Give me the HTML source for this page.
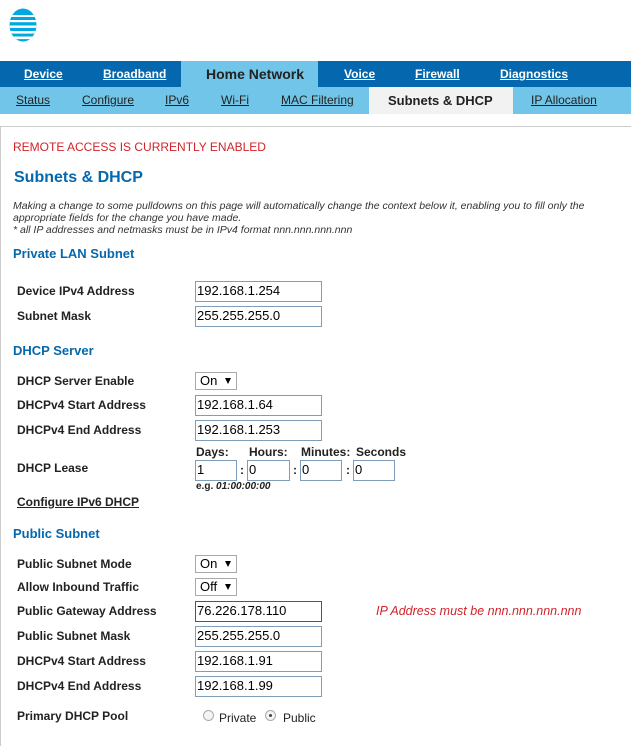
<!DOCTYPE html>
<html><head><style>
body{margin:0;width:631px;height:733px;background:#fff;font-family:"Liberation Sans",Arial,sans-serif;position:relative;overflow:hidden}
.a{position:absolute;white-space:nowrap;line-height:1}
.tn{color:#fff;font-weight:bold;font-size:12px;text-decoration:underline}
.sn{color:#222;font-size:12px;text-decoration:underline}
.l{font-size:12px;font-weight:bold;color:#222}
.h{font-size:13px;font-weight:bold;color:#0568ae}
.i{position:absolute;height:19px;border:1px solid #7f9db9;box-sizing:border-box;font-size:13px;line-height:17px;padding-left:1px;color:#000;background:#fff}
.s{position:absolute;height:18px;border:1px solid #a9a9a9;box-sizing:border-box;font-size:13px;line-height:16px;padding-left:4px;background:#fff}
.s:after{content:"";position:absolute;right:5px;top:5px;border-left:3px solid transparent;border-right:3px solid transparent;border-top:6px solid #000}
.r{position:absolute;width:11px;height:11px;border:1px solid #aaa;border-radius:50%;box-sizing:border-box;background:#f4f4f4}
</style></head><body>
<svg class="a" style="left:9px;top:8px" width="28" height="34" viewBox="0 0 28 34">
<defs><clipPath id="c"><ellipse cx="14" cy="17" rx="13.5" ry="16.5"/></clipPath></defs>
<g clip-path="url(#c)"><rect width="28" height="34" fill="#00a8e0"/>
<rect x="0" y="7" width="28" height="2" fill="#fff"/>
<rect x="0" y="12" width="28" height="2.2" fill="#fff"/>
<rect x="0" y="17.5" width="28" height="2.4" fill="#fff"/>
<rect x="0" y="23" width="28" height="2.6" fill="#fff"/>
<rect x="0" y="28.5" width="28" height="2.6" fill="#fff"/></g></svg>
<div style="position:absolute;left:0;top:61px;width:631px;height:26px;background:#0568ae"></div>
<div style="position:absolute;left:181px;top:61px;width:137px;height:26px;background:#71c5e8"></div>
<div style="position:absolute;left:0;top:87px;width:631px;height:27px;background:#71c5e8"></div>
<div style="position:absolute;left:369px;top:87px;width:144px;height:27px;background:#f2f2f2"></div>
<div class="a tn" style="left:24px;top:68px">Device</div>
<div class="a tn" style="left:103px;top:68px">Broadband</div>
<div class="a" style="left:206px;top:67px;font-size:14px;font-weight:bold;color:#222">Home Network</div>
<div class="a tn" style="left:344px;top:68px">Voice</div>
<div class="a tn" style="left:415px;top:68px">Firewall</div>
<div class="a tn" style="left:500px;top:68px">Diagnostics</div>
<div class="a sn" style="left:16px;top:94px">Status</div>
<div class="a sn" style="left:82px;top:94px">Configure</div>
<div class="a sn" style="left:165px;top:94px">IPv6</div>
<div class="a sn" style="left:221px;top:94px">Wi-Fi</div>
<div class="a sn" style="left:281px;top:94px">MAC Filtering</div>
<div class="a" style="left:388px;top:94px;font-size:13px;font-weight:bold;color:#222">Subnets &amp; DHCP</div>
<div class="a sn" style="left:531px;top:94px">IP Allocation</div>
<div style="position:absolute;left:0;top:126px;width:640px;height:620px;border:1px solid #ccc;border-right:none;border-bottom:none;box-sizing:border-box"></div>
<div class="a" style="left:13px;top:141px;font-size:12px;color:#d2232a">REMOTE ACCESS IS CURRENTLY ENABLED</div>
<div class="a" style="left:14px;top:170px;font-size:16px;font-weight:bold;color:#0568ae">Subnets &amp; DHCP</div>
<div class="a" style="left:13px;top:200px;font-size:10.5px;font-style:italic;color:#333;line-height:12px">Making a change to some pulldowns on this page will automatically change the context below it, enabling you to fill only the<br>appropriate fields for the change you have made.<br>* all IP addresses and netmasks must be in IPv4 format nnn.nnn.nnn.nnn</div>
<div class="a h" style="left:13px;top:247px">Private LAN Subnet</div>
<div class="a l" style="left:17px;top:285px">Device IPv4 Address</div><div class="i" style="left:195px;top:281px;width:127px;height:21px">192.168.1.254</div>
<div class="a l" style="left:17px;top:310px">Subnet Mask</div><div class="i" style="left:195px;top:306px;width:127px;height:21px">255.255.255.0</div>
<div class="a h" style="left:13px;top:344px">DHCP Server</div>
<div class="a l" style="left:17px;top:375px">DHCP Server Enable</div><div class="s" style="left:195px;top:372px;width:42px">On</div>
<div class="a l" style="left:17px;top:399px">DHCPv4 Start Address</div><div class="i" style="left:195px;top:395px;width:127px;height:21px">192.168.1.64</div>
<div class="a l" style="left:17px;top:424px">DHCPv4 End Address</div><div class="i" style="left:195px;top:420px;width:127px;height:21px">192.168.1.253</div>
<div class="a l" style="left:196px;top:446px">Days:</div><div class="a l" style="left:249px;top:446px">Hours:</div><div class="a l" style="left:301px;top:446px">Minutes:</div><div class="a l" style="left:356px;top:446px">Seconds</div>
<div class="a l" style="left:17px;top:462px">DHCP Lease</div>
<div class="i" style="left:195px;top:460px;width:42px;height:21px">1</div><div class="a l" style="left:240px;top:464px">:</div>
<div class="i" style="left:247px;top:460px;width:43px;height:21px">0</div><div class="a l" style="left:293px;top:464px">:</div>
<div class="i" style="left:300px;top:460px;width:42px;height:21px">0</div><div class="a l" style="left:346px;top:464px">:</div>
<div class="i" style="left:353px;top:460px;width:42px;height:21px">0</div>
<div class="a" style="left:196px;top:482px;font-size:10px;font-weight:bold;font-style:italic;color:#222"><span style="font-style:normal">e.g.</span> 01:00:00:00</div>
<div class="a l" style="left:17px;top:496px;text-decoration:underline">Configure IPv6 DHCP</div>
<div class="a h" style="left:13px;top:527px">Public Subnet</div>
<div class="a l" style="left:17px;top:558px">Public Subnet Mode</div><div class="s" style="left:195px;top:555px;width:42px">On</div>
<div class="a l" style="left:17px;top:581px">Allow Inbound Traffic</div><div class="s" style="left:195px;top:578px;width:42px">Off</div>
<div class="a l" style="left:17px;top:605px">Public Gateway Address</div><div class="i" style="left:195px;top:601px;width:127px;height:21px;border:1px solid #c8232a">76.226.178.110</div>
<div class="a" style="left:376px;top:605px;font-size:12.5px;font-style:italic;color:#d2232a">IP Address must be nnn.nnn.nnn.nnn</div>
<div class="a l" style="left:17px;top:630px">Public Subnet Mask</div><div class="i" style="left:195px;top:626px;width:127px;height:21px">255.255.255.0</div>
<div class="a l" style="left:17px;top:655px">DHCPv4 Start Address</div><div class="i" style="left:195px;top:651px;width:127px;height:21px">192.168.1.91</div>
<div class="a l" style="left:17px;top:680px">DHCPv4 End Address</div><div class="i" style="left:195px;top:676px;width:127px;height:21px">192.168.1.99</div>
<div class="a l" style="left:17px;top:710px">Primary DHCP Pool</div>
<div class="r" style="left:203px;top:710px"></div><div class="a" style="left:219px;top:712px;font-size:12px;color:#222">Private</div>
<div class="r" style="left:265px;top:710px"><div style="position:absolute;left:3px;top:3px;width:3px;height:3px;border-radius:50%;background:#444"></div></div><div class="a" style="left:283px;top:712px;font-size:12px;color:#222">Public</div>
</body></html>
